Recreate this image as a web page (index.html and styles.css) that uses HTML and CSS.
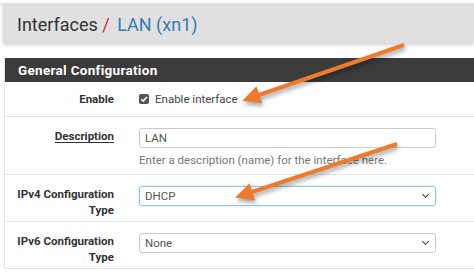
FILE: index.html
```html
<!DOCTYPE html>
<html lang="en">
<head>
    <meta charset="UTF-8">
    <meta name="viewport" content="width=device-width, initial-scale=1.0">
    <title>Interfaces / LAN (xn1)</title>
    <link rel="stylesheet" href="styles.css">
</head>
<body>
    <div class="page">
        <div class="page-header">
            <span class="crumb">Interfaces</span>
            <span class="sep">/</span>
            <span class="crumb-active">LAN (xn1)</span>
        </div>

        <div class="panel">
            <div class="panel-title">General Configuration</div>

            <div class="row row-enable">
                <div class="label">Enable</div>
                <div class="field">
                    <label class="check">
                        <span class="checkbox">
                            <svg viewBox="0 0 10 10" width="10" height="10"><path d="M2.2 5.2 L4.2 7.1 L7.9 3" fill="none" stroke="#fff" stroke-width="1.5"/></svg>
                        </span>
                        Enable interface
                    </label>
                </div>
            </div>

            <div class="row row-desc">
                <div class="label"><span class="underline">Description</span></div>
                <div class="field">
                    <div class="input">LAN</div>
                    <div class="help">Enter a description (name) for the interface here.</div>
                </div>
            </div>

            <div class="row">
                <div class="label">IPv4 Configuration<br>Type</div>
                <div class="field">
                    <div class="select focused">DHCP <span class="chev"></span></div>
                </div>
            </div>

            <div class="row">
                <div class="label">IPv6 Configuration<br>Type</div>
                <div class="field">
                    <div class="select">None <span class="chev"></span></div>
                </div>
            </div>
        </div>

        <svg class="arrows" width="474" height="273" viewBox="0 0 474 273">
            <defs>
                <marker id="head" viewBox="0 0 10 10" refX="2" refY="5" markerWidth="4.5" markerHeight="4.5" orient="auto">
                    <path d="M0 0 L10 5 L0 10 Z" fill="#ee7b2d"/>
                </marker>
            </defs>
            <line x1="404" y1="42" x2="256" y2="93" stroke="#ee7b2d" stroke-width="4" marker-end="url(#head)"/>
            <line x1="397" y1="141" x2="249" y2="190" stroke="#ee7b2d" stroke-width="4" marker-end="url(#head)"/>
        </svg>
    </div>
</body>
</html>
```

FILE: styles.css
```css
* {
    margin: 0;
    padding: 0;
    box-sizing: border-box;
}

body {
    font-family: Roboto, 'Liberation Sans', sans-serif;
    background: white;
    color: #333;
    width: 474px;
    height: 273px;
    overflow: hidden;
}

.page {
    position: relative;
    height: 273px;
    background: linear-gradient(#f2f2f2 0, #f2f2f2 3px, white 3px);
}

.page-header {
    margin: 3px 0 15px 3px;
    height: 40px;
    background: #e0e0e0;
    box-shadow: 0 2px 4px rgba(0, 0, 0, 0.18);
    padding: 11px 0 0 14px;
    font-size: 18px;
    line-height: 22px;
}

.crumb {
    color: #333;
}

.sep {
    color: #c9302c;
}

.crumb-active {
    color: #317cb5;
    margin-left: 3px;
}

.panel {
    margin-left: 4px;
    border-left: 1px solid #e3e3e3;
}

.panel-title {
    background: #3b3b3b;
    color: white;
    font-weight: bold;
    font-size: 13.5px;
    letter-spacing: 0.3px;
    height: 24px;
    line-height: 24px;
    padding-left: 13px;
}

.row {
    display: flex;
    border-bottom: 1px solid #e6e6e6;
    padding: 11px 0 3px;
    font-size: 11.5px;
}

.row-enable {
    padding: 9px 0 9px;
}

.row-desc {
    padding: 11px 0 5px;
}

.label {
    width: 109px;
    text-align: right;
    font-weight: bold;
    line-height: 16px;
    color: #333;
}

.underline {
    text-decoration: underline;
    text-underline-offset: 2px;
}

.field {
    margin-left: 25px;
    width: 297px;
}

.check {
    display: flex;
    align-items: center;
    gap: 6px;
    color: #444;
    line-height: 16px;
}

.checkbox {
    width: 10px;
    height: 10px;
    background: #555;
    border-radius: 2px;
    display: flex;
}

.input,
.select {
    height: 20px;
    border: 1px solid #ccc;
    border-radius: 3px;
    padding: 0 5px;
    line-height: 18px;
    color: #555;
    position: relative;
}

.help {
    color: #777;
    margin-top: 4px;
    line-height: 17px;
}

.select.focused {
    border-color: #9cc3e6;
    box-shadow: 0 0 3px rgba(102, 175, 233, 0.45);
}

.chev {
    position: absolute;
    right: 7px;
    top: 5px;
    width: 5px;
    height: 5px;
    border-right: 1.5px solid #444;
    border-bottom: 1.5px solid #444;
    transform: rotate(45deg);
}

.arrows {
    position: absolute;
    left: 0;
    top: 0;
    filter: drop-shadow(1px 3px 2px rgba(0, 0, 0, 0.35));
}
```
